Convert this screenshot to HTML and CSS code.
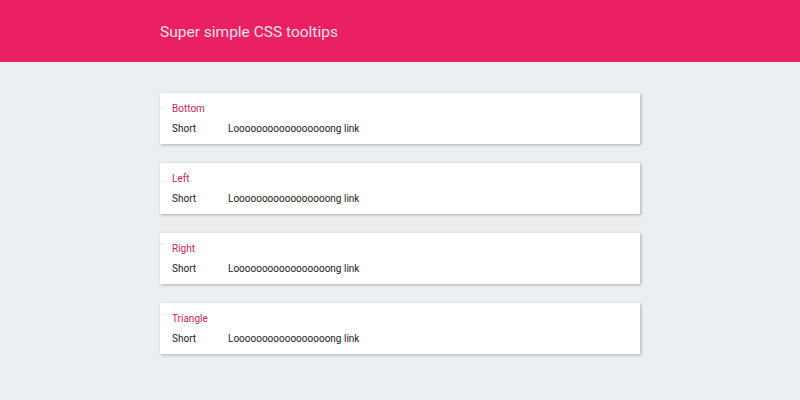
FILE: index.html
```html
<!DOCTYPE html>
<html>
<head>
<meta charset="utf-8">
<link rel="stylesheet" href="styles.css">
</head>
<body>
<header class="header">
  <h1 class="title">Super simple CSS tooltips</h1>
</header>
<main class="main">
  <section class="card">
    <h2 class="card-title">Bottom</h2>
    <div class="row"><span class="cell">Short</span><span class="cell">Looooooooooooooooong link</span></div>
  </section>
  <section class="card">
    <h2 class="card-title">Left</h2>
    <div class="row"><span class="cell">Short</span><span class="cell">Looooooooooooooooong link</span></div>
  </section>
  <section class="card">
    <h2 class="card-title">Right</h2>
    <div class="row"><span class="cell">Short</span><span class="cell">Looooooooooooooooong link</span></div>
  </section>
  <section class="card">
    <h2 class="card-title">Triangle</h2>
    <div class="row"><span class="cell">Short</span><span class="cell">Looooooooooooooooong link</span></div>
  </section>
</main>
</body>
</html>
```
FILE: styles.css
```css
html, body {
  margin: 0;
  padding: 0;
}
body {
  background: #eceff1;
  font-family: Roboto, "Liberation Sans", sans-serif;
  color: #212121;
  min-height: 100vh;
}
.header {
  background: #eb1f63;
  height: 62px;
  box-sizing: border-box;
  padding: 1px 160px 0;
  display: flex;
  align-items: center;
}
.title {
  margin: 0;
  font-size: 15.5px;
  font-weight: 400;
  color: #fbe0ea;
  line-height: 20px;
}
.main {
  width: 480px;
  margin: 31px auto 0;
  padding-bottom: 40px;
  display: flex;
  flex-direction: column;
  gap: 19px;
}
.card {
  background: #fff;
  height: 51px;
  box-sizing: border-box;
  padding: 8px 12px 0;
  box-shadow: 1px 1px 3px rgba(0, 0, 0, 0.28);
}
.card-title {
  margin: 0;
  font-size: 10px;
  font-weight: 400;
  line-height: 16px;
  color: #cf2160;
}
.row {
  margin-top: 4px;
  display: flex;
  font-size: 10px;
  line-height: 16px;
}
.cell:first-child {
  width: 56px;
}
```
